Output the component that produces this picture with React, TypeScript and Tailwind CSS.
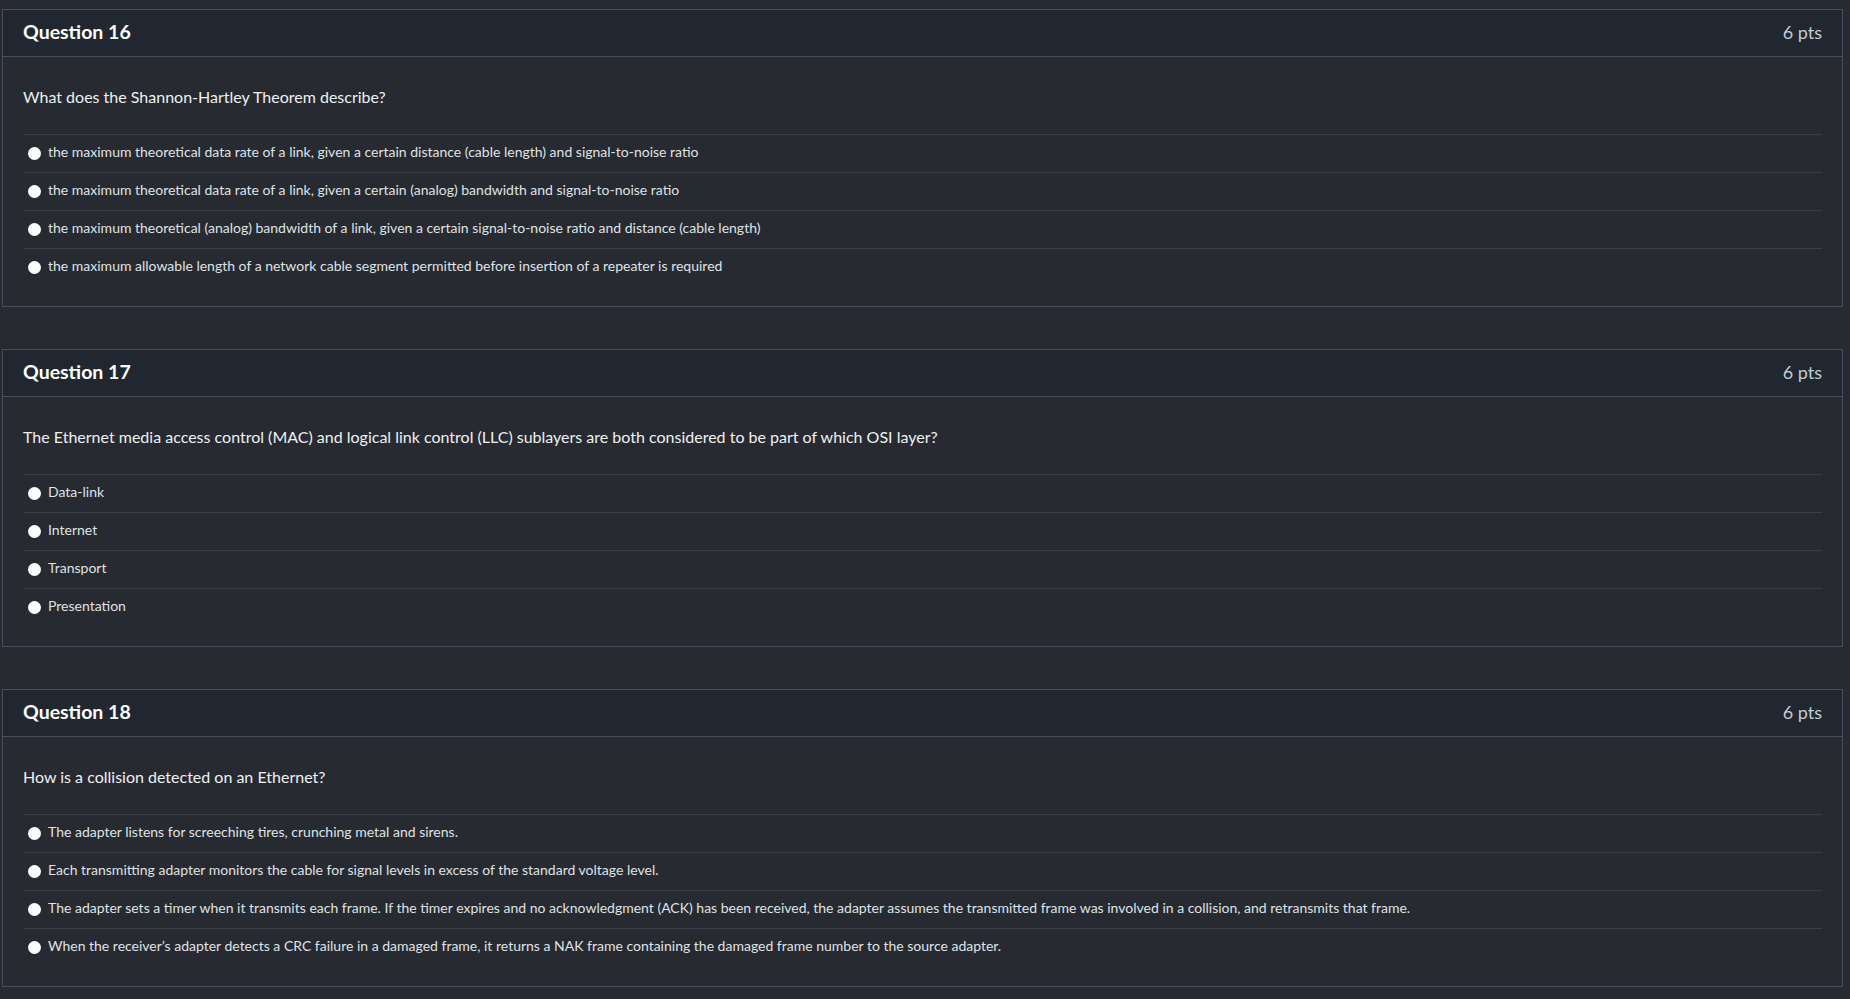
import React from "react";

type Q = { num: number; text: string; answers: string[] };

const questions: Q[] = [
  {
    num: 16,
    text: "What does the Shannon-Hartley Theorem describe?",
    answers: [
      "the maximum theoretical data rate of a link, given a certain distance (cable length) and signal-to-noise ratio",
      "the maximum theoretical data rate of a link, given a certain (analog) bandwidth and signal-to-noise ratio",
      "the maximum theoretical (analog) bandwidth of a link, given a certain signal-to-noise ratio and distance (cable length)",
      "the maximum allowable length of a network cable segment permitted before insertion of a repeater is required",
    ],
  },
  {
    num: 17,
    text: "The Ethernet media access control (MAC) and logical link control (LLC) sublayers are both considered to be part of which OSI layer?",
    answers: ["Data-link", "Internet", "Transport", "Presentation"],
  },
  {
    num: 18,
    text: "How is a collision detected on an Ethernet?",
    answers: [
      "The adapter listens for screeching tires, crunching metal and sirens.",
      "Each transmitting adapter monitors the cable for signal levels in excess of the standard voltage level.",
      "The adapter sets a timer when it transmits each frame. If the timer expires and no acknowledgment (ACK) has been received, the adapter assumes the transmitted frame was involved in a collision, and retransmits that frame.",
      "When the receiver\u2019s adapter detects a CRC failure in a damaged frame, it returns a NAK frame containing the damaged frame number to the source adapter.",
    ],
  },
];

function Card({ q }: { q: Q }) {
  return (
    <div className="w-[1841px] border border-[#4a4e5c] bg-[#272a30]">
      <div className="flex h-[47px] items-center justify-between border-b border-[#4a4e5c] bg-[#212730] pb-[2px] pl-[20px] pr-[20px]">
        <div className="text-[19.5px] font-bold text-white">Question {q.num}</div>
        <div className="text-[18px] text-[#c3cad0]">6 pts</div>
      </div>
      <div className="px-[20px] pt-[28px] pb-[20px]">
        <div className="text-[16px] leading-[24px] text-[#eef0f2]">{q.text}</div>
        <div className="mt-[25px]">
          {q.answers.map((a, i) => (
            <div key={i} className="flex h-[38px] items-center border-t border-[#3a3d43] pb-[4px] pl-[5px]">
              <span className="mt-[3px] h-[13px] w-[13px] shrink-0 rounded-full bg-white" />
              <span className="ml-[7px] text-[14px] leading-[20px] text-[#dfe2e6]">{a}</span>
            </div>
          ))}
        </div>
      </div>
    </div>
  );
}

export default function App() {
  return (
    <div
      className="min-h-[999px] bg-[#272a30] pl-[2px] pt-[9px]"
      style={{ fontFamily: "Lato, 'Noto Sans', sans-serif" }}
    >
      <div className="flex flex-col gap-[42px]">
        {questions.map((q) => (
          <Card key={q.num} q={q} />
        ))}
      </div>
    </div>
  );
}
